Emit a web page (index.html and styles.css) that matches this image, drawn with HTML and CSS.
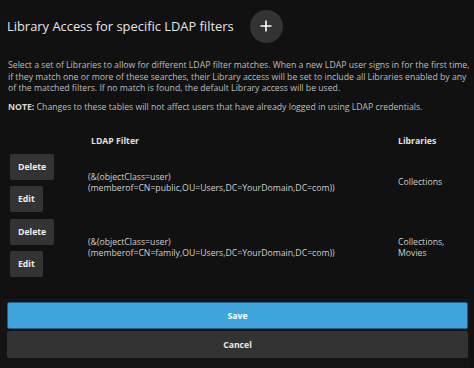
FILE: index.html
```html
<!DOCTYPE html>
<html>
<head>
<meta charset="utf-8">
<link rel="stylesheet" href="styles.css">
</head>
<body>
<div class="page">
  <div class="title-row">
    <h1 class="title">Library Access for specific LDAP filters</h1>
    <button class="add-btn" aria-label="Add">
      <svg width="12" height="12" viewBox="0 0 12 12"><path d="M6 0.5v11M0.5 6h11" stroke="#fff" stroke-width="1.6"/></svg>
    </button>
  </div>
  <p class="desc">Select a set of Libraries to allow for different LDAP filter matches. When a new LDAP user signs in for the first time, if they match one or more of these searches, their Library access will be set to include all Libraries enabled by any of the matched filters. If no match is found, the default Library access will be used.</p>
  <p class="note"><b>NOTE:</b> Changes to these tables will not affect users that have already logged in using LDAP credentials.</p>
  <div class="table">
    <div class="head"></div>
    <div class="head">LDAP Filter</div>
    <div class="head">Libraries</div>

    <div class="actions"><button class="btn">Delete</button><button class="btn">Edit</button></div>
    <div class="cell">(&amp;(objectClass=user)<br>(memberof=CN=public,OU=Users,DC=YourDomain,DC=com))</div>
    <div class="cell">Collections</div>

    <div class="actions"><button class="btn">Delete</button><button class="btn">Edit</button></div>
    <div class="cell">(&amp;(objectClass=user)<br>(memberof=CN=family,OU=Users,DC=YourDomain,DC=com))</div>
    <div class="cell">Collections,<br>Movies</div>
  </div>
</div>
<div class="footer">
  <button class="wide save">Save</button>
  <button class="wide cancel">Cancel</button>
</div>
</body>
</html>
```
FILE: styles.css
```css
html, body {
  margin: 0;
  padding: 0;
  background: #111111;
  color: #d6d6d6;
  font-family: "Open Sans", "Noto Sans", sans-serif;
}
.page {
  padding: 0 1px 0 8px;
  height: 297px;
  box-sizing: border-box;
}
.title-row {
  display: flex;
  align-items: center;
  height: 36px;
  padding-top: 8px;
}
.title {
  margin: 0;
  font-size: 12.9px;
  font-weight: 400;
  color: #e6e6e6;
  margin-left: -1px;
}
.add-btn {
  margin-left: 16px;
  width: 33px;
  height: 33px;
  border-radius: 50%;
  border: none;
  background: #333333;
  display: flex;
  align-items: center;
  justify-content: center;
  padding: 0;
}
.desc {
  margin: 16px 0 0;
  font-size: 8.7px;
  line-height: 11.5px;
  color: #bdbdbd;
}
.note {
  margin: 7px 0 0;
  font-size: 8.7px;
  line-height: 11.5px;
  color: #bdbdbd;
}
.note b { color: #d8d8d8; }
.table {
  display: grid;
  grid-template-columns: 80px 310px 1fr;
  margin-top: 22px;
  row-gap: 7px;
  align-items: center;
}
.head {
  font-size: 8.7px;
  font-weight: 700;
  color: #e0e0e0;
  line-height: 13px;
  margin-bottom: -1px;
}
.head:nth-child(2) { padding-left: 3px; }
.actions {
  display: flex;
  flex-direction: column;
  align-items: flex-start;
  gap: 6px;
  padding-left: 2px;
}
.btn {
  background: #333333;
  color: #eeeeee;
  border: none;
  border-radius: 2px;
  font-family: inherit;
  font-size: 8.7px;
  font-weight: 700;
  height: 26px;
  padding: 0 8px;
}
.cell {
  font-size: 8.7px;
  line-height: 11.5px;
  color: #cfcfcf;
}
.footer {
  background: #141414;
  border-top: 1px solid #0b0b0b;
  margin-right: 4px;
  padding: 4px 2px 10px 7px;
  display: flex;
  flex-direction: column;
  gap: 2px;
}
.wide {
  height: 27px;
  border-radius: 2px;
  font-family: inherit;
  font-size: 8.7px;
  font-weight: 700;
  color: #ffffff;
  border: none;
}
.save {
  background: #3fa3dc;
  border: 1px solid #1f5f88;
}
.cancel {
  background: #333333;
  color: #e8e8e8;
}
```
